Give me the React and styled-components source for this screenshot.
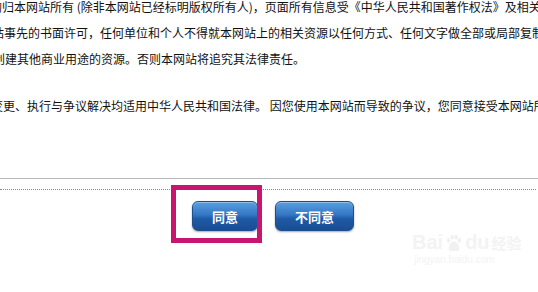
import React from "react";
import styled, { createGlobalStyle } from "styled-components";

const GlobalStyle = createGlobalStyle`
  html, body {
    margin: 0;
    padding: 0;
    background: #fff;
  }
  body {
    font-family: "Noto Sans CJK SC", "Liberation Sans", sans-serif;
  }
`;

const Page = styled.div`
  position: relative;
  width: 538px;
  height: 292px;
  overflow: hidden;
  background: #fff;
`;

const Paragraph = styled.div`
  margin-top: ${(p) => p.$top}px;
  font-size: 12px;
  line-height: 26px;
  color: #111;
`;

const Line = styled.div`
  white-space: nowrap;
  margin-left: ${(p) => p.$shift}px;
`;

const SolidRule = styled.div`
  margin-top: 59px;
  height: 1px;
  background: #b9b9b9;
`;

const DottedRule = styled.div`
  margin-top: 10px;
  width: 536px;
  border-top: 1px dotted #8a8a8a;
`;

const ButtonRow = styled.div`
  position: relative;
  display: flex;
  justify-content: center;
  gap: 17px;
  margin-top: 11px;
  padding-left: 8px;
`;

const Button = styled.button`
  width: ${(p) => p.$width}px;
  height: 30px;
  padding: 0;
  border: 1px solid #1d4f8f;
  border-radius: 6px;
  background: linear-gradient(#5a9ee0 0%, #3478c6 45%, #1f5aa6 60%, #1a4d92 100%);
  box-shadow: 0 1px 2px rgba(0, 0, 0, 0.35), inset 0 1px 0 rgba(255, 255, 255, 0.35);
  color: #fff;
  font-family: "Noto Sans CJK SC", sans-serif;
  font-size: 13px;
  font-weight: 700;
  cursor: pointer;
`;

const Highlight = styled.div`
  position: absolute;
  left: 171px;
  top: -16px;
  width: 81px;
  height: 48px;
  border: 5px solid #c8156f;
  pointer-events: none;
`;

const Watermark = styled.div`
  position: absolute;
  left: 412px;
  top: 232px;
  color: #f3f3f3;
  font-family: "Liberation Sans", sans-serif;
  line-height: 1;
`;

const MarkTitle = styled.div`
  display: flex;
  align-items: baseline;
  gap: 2px;
  font-size: 20px;
  font-weight: 700;

  small {
    font-family: "Noto Sans CJK SC", sans-serif;
    font-size: 15px;
  }
`;

const Paw = styled.svg`
  width: 18px;
  height: 18px;
  align-self: flex-end;
`;

const MarkUrl = styled.div`
  margin-top: 3px;
  margin-left: 2px;
  font-size: 10px;
`;

export default function App() {
  return (
    <>
      <GlobalStyle />
      <Page>
        <Paragraph $top={-6}>
          <Line $shift={-10}>
            均归本网站所有 (除非本网站已经标明版权所有人)，页面所有信息受《中华人民共和国著作权法》及相关法律法规的保护。
          </Line>
          <Line $shift={-8}>
            站事先的书面许可，任何单位和个人不得就本网站上的相关资源以任何方式、任何文字做全部或局部复制、转载。
          </Line>
          <Line $shift={-7}>创建其他商业用途的资源。否则本网站将追究其法律责任。</Line>
        </Paragraph>
        <Paragraph $top={21}>
          <Line $shift={-9}>
            变更、执行与争议解决均适用中华人民共和国法律。 因您使用本网站而导致的争议，您同意接受本网站所在地法院管辖。
          </Line>
        </Paragraph>
        <SolidRule />
        <DottedRule />
        <ButtonRow>
          <Button $width={66}>同意</Button>
          <Button $width={79}>不同意</Button>
          <Highlight />
        </ButtonRow>
        <Watermark>
          <MarkTitle>
            Bai
            <Paw viewBox="0 0 20 20" fill="#f1f1f1">
              <ellipse cx="4" cy="7" rx="2" ry="2.6" />
              <ellipse cx="8" cy="3.5" rx="2" ry="2.6" />
              <ellipse cx="12.5" cy="3.5" rx="2" ry="2.6" />
              <ellipse cx="16" cy="7" rx="2" ry="2.6" />
              <path d="M10 8c-3 0-6 5-6 8 0 2 2 3 3 3h6c1 0 3-1 3-3 0-3-3-8-6-8z" />
            </Paw>
            du <small>经验</small>
          </MarkTitle>
          <MarkUrl>jingyan.baidu.com</MarkUrl>
        </Watermark>
      </Page>
    </>
  );
}
